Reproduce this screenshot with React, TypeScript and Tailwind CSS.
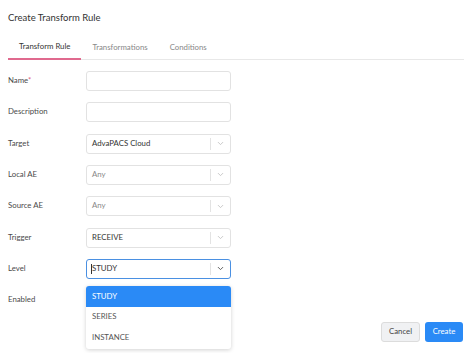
import { ChevronDown } from 'lucide-react'

const font = { fontFamily: 'Lato, "Noto Sans", sans-serif' }

function Chevron({ dark }: { dark?: boolean }) {
  return (
    <div className="flex items-center h-full">
      <div className="w-px h-[12px] bg-[#e3e3e3]" />
      <div className="w-[19px] flex justify-center">
        <ChevronDown
          className={dark ? 'w-[9px] h-[9px] text-[#555]' : 'w-[9px] h-[9px] text-[#c5c5c5]'}
          strokeWidth={2.5}
        />
      </div>
    </div>
  )
}

function Row({ label, required, children }: { label: string; required?: boolean; children?: React.ReactNode }) {
  return (
    <div className="flex items-center h-[20px]">
      <div className="w-[78px] text-[7.8px] text-[#4a4a4a]">
        {label}
        {required && <span className="text-[#e0607e]">*</span>}
      </div>
      <div className="w-[145px] h-[20px]">{children}</div>
    </div>
  )
}

function Input() {
  return <div className="w-full h-full border border-[#e2e2e2] rounded-[3px] bg-white" />
}

function Select({ value, muted }: { value: string; muted?: boolean }) {
  return (
    <div className="w-full h-full border border-[#e2e2e2] rounded-[3px] bg-white flex items-center">
      <div className={'flex-1 pl-[5px] text-[7.8px] ' + (muted ? 'text-[#888]' : 'text-[#333]')}>{value}</div>
      <Chevron />
    </div>
  )
}

export default function App() {
  return (
    <div className="w-[474px] h-[353px] bg-white relative overflow-hidden" style={font}>
      <div className="pl-[8px] pt-[11px] text-[9.5px] text-[#333] leading-[14px]">Create Transform Rule</div>

      <div className="mt-[11px] mx-[8px] w-[456px] flex border-b border-[#e8e8e8] h-[24px]">
        <div className="px-[11px] flex items-center text-[7.8px] text-[#333] border-b-2 border-[#e0698e] -mb-px">
          Transform Rule
        </div>
        <div className="px-[11px] flex items-center text-[7.8px] text-[#888] -mb-px">Transformations</div>
        <div className="px-[11px] flex items-center text-[7.8px] text-[#888] -mb-px">Conditions</div>
      </div>

      <div className="pl-[8px] pt-[11px] flex flex-col gap-[11.33px]">
        <Row label="Name" required>
          <Input />
        </Row>
        <Row label="Description">
          <Input />
        </Row>
        <Row label="Target">
          <Select value="AdvaPACS Cloud" />
        </Row>
        <Row label="Local AE">
          <Select value="Any" muted />
        </Row>
        <Row label="Source AE">
          <Select value="Any" muted />
        </Row>
        <Row label="Trigger">
          <Select value="RECEIVE" />
        </Row>
        <Row label="Level">
          <div className="relative w-full h-full">
            <div className="w-full h-full border border-[#4a90e2] rounded-[3px] bg-white flex items-center">
              <div className="flex-1 pl-[4px] text-[7.8px] text-[#333] flex items-center">
                <span className="w-px h-[10px] bg-[#333]" />
                STUDY
              </div>
              <Chevron dark />
            </div>
            <div className="absolute left-0 top-[27px] w-full bg-white rounded-[3px] shadow-[0_1px_4px_rgba(0,0,0,0.18)] z-10 text-[7.8px] pb-[1px]">
              <div className="h-[21px] flex items-center pl-[6px] bg-[#2a8af6] text-white rounded-t-[3px]">STUDY</div>
              <div className="h-[20px] flex items-center pl-[6px] text-[#555]">SERIES</div>
              <div className="h-[21px] flex items-center pl-[6px] text-[#555]">INSTANCE</div>
            </div>
          </div>
        </Row>
        <Row label="Enabled" />
      </div>

      <div className="absolute right-[11px] bottom-[11px] flex gap-[5px]">
        <button className="w-[39px] h-[20px] rounded-[3px] bg-[#f0f1f3] border border-[#dcdcdc] text-[7.8px] text-[#444]">
          Cancel
        </button>
        <button className="w-[38px] h-[20px] rounded-[3px] bg-[#2a8af6] text-[7.8px] text-white">Create</button>
      </div>
    </div>
  )
}
